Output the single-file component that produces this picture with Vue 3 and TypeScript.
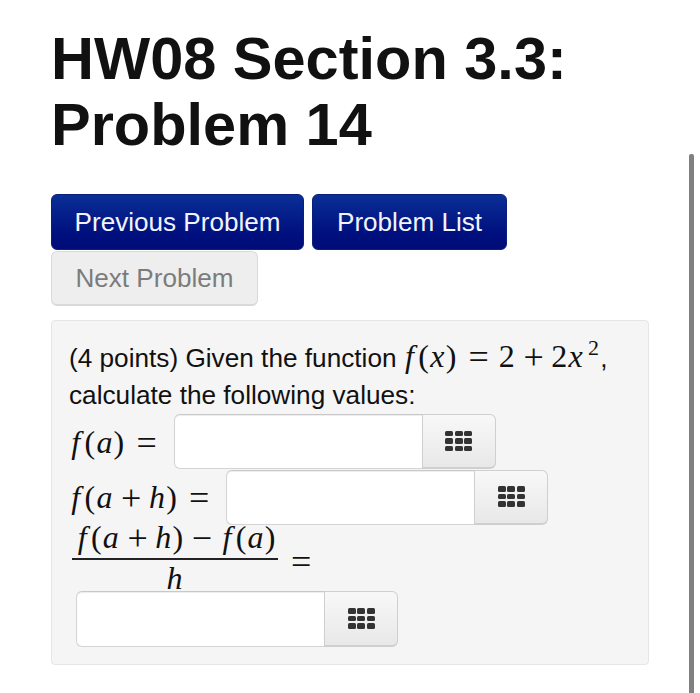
<template>
  <div class="page">
    <h1>HW08 Section 3.3:<br />Problem 14</h1>

    <div class="nav">
      <a class="btn primary prev">Previous Problem</a>
      <a class="btn primary list">Problem List</a>
      <a class="btn disabled">Next Problem</a>
    </div>

    <div class="well">
      <div class="text">
        (4 points) Given the function
        <span class="math"><i class="f">f</i>(<i>x</i>)<span class="rel">=</span>2<span class="bin">+</span>2<i>x</i><sup>2</sup></span>,
      </div>
      <div class="text">calculate the following values:</div>

      <div class="row first">
        <span class="math label"><i class="f">f</i>(<i>a</i>)<span class="rel">=</span></span>
        <div class="answer">
          <div class="field"></div>
          <div class="addon"><span class="grid"><b v-for="n in 9" :key="n"></b></span></div>
        </div>
      </div>

      <div class="row">
        <span class="math label"><i class="f">f</i>(<i>a</i><span class="bin">+</span><i>h</i>)<span class="rel">=</span></span>
        <div class="answer">
          <div class="field"></div>
          <div class="addon"><span class="grid"><b v-for="n in 9" :key="n"></b></span></div>
        </div>
      </div>

      <div class="fraction-row math">
        <div class="fraction">
          <div class="num"><i class="f">f</i>(<i>a</i><span class="bin">+</span><i>h</i>)<span class="bin minus">−</span><i class="f">f</i>(<i>a</i>)</div>
          <div class="den"><i>h</i></div>
        </div>
        <span class="frac-eq"><span class="op">=</span></span>
      </div>

      <div class="answer third">
        <div class="field"></div>
        <div class="addon"><span class="grid"><b v-for="n in 9" :key="n"></b></span></div>
      </div>
    </div>

    <div class="scrollbar"></div>
  </div>
</template>

<script setup lang="ts">
</script>

<style>
html,
body {
  margin: 0;
  background: #fff;
  overflow: hidden;
}
</style>

<style scoped>
.page {
  width: 700px;
  height: 693px;
  box-sizing: border-box;
  padding: 26px 51px 0;
  font-family: "Liberation Sans", Arial, sans-serif;
  color: #111;
  overflow: hidden;
}

h1 {
  margin: 0;
  font-size: 59.5px;
  line-height: 66px;
  font-weight: 700;
  white-space: nowrap;
}

.nav {
  display: flex;
  flex-wrap: wrap;
  column-gap: 8px;
  row-gap: 1px;
  margin-top: 36px;
  height: 112px;
}

.btn {
  box-sizing: border-box;
  height: 56px;
  display: flex;
  align-items: center;
  justify-content: center;
  border-radius: 6px;
  font-size: 26.1px;
}

.primary {
  color: #f2f4fb;
  background: linear-gradient(#0a2f96, #00107f 70%, #000c78);
  border: 1px solid #0a1f7c;
}

.prev {
  width: 253px;
}

.list {
  width: 195px;
}

.disabled {
  width: 207px;
  height: 55px;
  color: #7c7c7c;
  background: #eeeeee;
  border: 1px solid #dadada;
  border-bottom-width: 2px;
}

.well {
  box-sizing: border-box;
  width: 598px;
  height: 345px;
  margin-top: 14px;
  padding: 19px 17px 0;
  background: #f5f5f5;
  border: 1px solid #e6e6e6;
  border-radius: 4px;
}

.text {
  font-size: 26.2px;
  line-height: 37px;
  white-space: nowrap;
}

.math {
  font-family: "Liberation Serif", "Times New Roman", serif;
  font-size: 32px;
  line-height: 1;
  letter-spacing: 1.2px;
}

.math .f {
  margin-right: 0.1em;
  margin-left: 0.04em;
}

.math i + sup {
  margin-left: 4px;
}

.math sup {
  font-size: 22px;
  line-height: 0;
}

.rel,
.bin,
.op {
  font-size: 36px;
  line-height: 0;
  vertical-align: -2px;
  letter-spacing: 0;
}

.rel {
  margin: 0 10px 0 11px;
}

.bin {
  margin: 0 7.5px;
}

.minus {
  margin-right: 9px;
}

.row {
  display: flex;
  align-items: center;
  height: 56px;
}

.row.first {
  height: 55px;
}

.label {
  padding-left: 1px;
  margin-right: 7px;
  white-space: nowrap;
}

.answer {
  display: flex;
  width: 322px;
  height: 55px;
  flex: none;
}

.field {
  flex: 1;
  background: #fff;
  border: 1.5px solid #d4d4d4;
  border-right: none;
  border-top-color: #c8c8c8;
  border-radius: 6px 0 0 6px;
  box-shadow: inset 0 1px 1px rgba(0, 0, 0, 0.075);
}

.addon {
  box-sizing: border-box;
  width: 74px;
  display: flex;
  align-items: center;
  justify-content: center;
  background: linear-gradient(#f8f8f8, #e8e8e8);
  border: 1.5px solid #cfcfcf;
  border-bottom-width: 2px;
  border-radius: 0 6px 6px 0;
}

.grid {
  display: grid;
  grid-template-columns: repeat(3, 8px);
  grid-auto-rows: 5.5px;
  gap: 2px 1.5px;
}

.grid b {
  background: #333;
  border-radius: 1.5px;
}

.fraction-row {
  display: flex;
  align-items: center;
  height: 66px;
  padding-left: 3px;
}

.fraction {
  width: 206px;
  text-align: center;
}

.num {
  box-sizing: border-box;
  height: 35px;
  padding-left: 3px;
  line-height: 25px;
  border-bottom: 2px solid #222;
  white-space: nowrap;
}

.den {
  height: 31px;
  line-height: 36px;
}

.frac-eq {
  margin-left: 13px;
  margin-top: 6px;
}

.third {
  margin-left: 7px;
  height: 56px;
}

.scrollbar {
  position: absolute;
  left: 689px;
  top: 154px;
  width: 5px;
  height: 539px;
  background: #808080;
  border-radius: 2px 2px 0 0;
}
</style>
